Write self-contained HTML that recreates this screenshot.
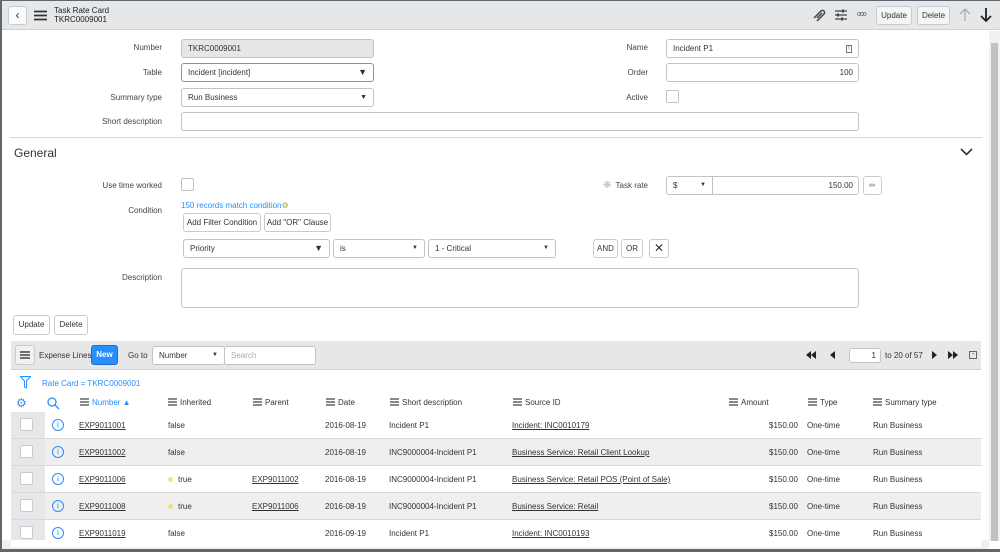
<html><head><style>
*{box-sizing:border-box;margin:0;padding:0}
body{width:1000px;height:552px;overflow:hidden;background:#5f6770;font-family:"Liberation Sans",sans-serif;font-size:8px;color:#333;position:relative}
.a{position:absolute}
#pg{left:0;top:1px;width:1000px;height:548px;background:#fff;overflow:hidden}
.hdr{left:0;top:0;width:1000px;height:29px;background:#e6e7e8;border-bottom:1px solid #cfd2d4}
.btn{position:absolute;border:1px solid #c8ccd0;border-radius:3px;background:#f4f5f5;font-size:8px;text-align:center;color:#333;white-space:nowrap}
.lbl{position:absolute;text-align:right;font-size:8px;color:#444}
.in{position:absolute;border:1px solid #bfc4c8;border-radius:3px;background:#fff;font-size:8px;padding-left:6px;line-height:17px;color:#333;white-space:nowrap}
.cb{position:absolute;width:13px;height:13px;border:1px solid #bfc4c8;border-radius:2px;background:#fff}
.car{position:absolute;right:6px;top:0;font-size:7px}
.ham{display:inline-block;width:9px;height:8px;vertical-align:-1px;margin-right:3px}
.th{position:absolute;top:397px;font-size:8px;color:#333;white-space:nowrap}
.row{position:absolute;left:10px;width:970px;height:27px;border-bottom:1px solid #d6d8da}
.row span{position:absolute;top:9px;font-size:8px;white-space:nowrap}
.u{text-decoration:underline}
.chk{position:absolute;left:9px;top:6px;width:13px;height:13px;background:#fff;border:1px solid #c8ccd0;border-radius:2px}
.info{position:absolute;left:41px;top:7px;width:12px;height:12px;border:1.2px solid #278efc;border-radius:50%;color:#278efc;font-size:8px;text-align:center;line-height:10px;font-family:"Liberation Serif",serif}
.dot{display:inline-block;width:5px;height:5px;border-radius:50%;background:#f0e08a;margin-right:5px}
</style></head><body>
<div class="a" id="pg">
<div class="a hdr">
 <div class="btn" style="left:8px;top:5px;width:19px;height:19px;background:#fafafa;font-size:12px;line-height:16px">&#8249;</div>
 <svg class="a" style="left:34px;top:9px" width="13" height="11"><path d="M0 1.5H13M0 5.5H13M0 9.5H13" stroke="#333" stroke-width="1.8"/></svg>
 <div class="a" style="left:54px;top:5px;font-size:8px;color:#222;line-height:9px">Task Rate Card<br>TKRC0009001</div>
 <svg class="a" style="left:812px;top:8px" width="14" height="14"><path d="M3 11L10 4a2 2 0 0 1 3 3L6 14" fill="none" stroke="#444" stroke-width="1.5" transform="translate(-1,-2)"/><path d="M5 9L10 4" stroke="#444" stroke-width="1.5"/></svg>
 <svg class="a" style="left:835px;top:8px" width="12" height="12"><path d="M0 2H12M0 6H12M0 10H12" stroke="#444" stroke-width="1.2"/><rect x="7" y="0.5" width="2" height="3" fill="#444"/><rect x="2" y="4.5" width="2" height="3" fill="#444"/><rect x="6" y="8.5" width="2" height="3" fill="#444"/></svg>
 <div class="a" style="left:857px;top:10px;font-size:7px;color:#555;letter-spacing:-1px">ooo</div>
 <div class="btn" style="left:876px;top:5px;width:36px;height:19px;line-height:17px">Update</div>
 <div class="btn" style="left:917px;top:5px;width:33px;height:19px;line-height:17px">Delete</div>
 <svg class="a" style="left:959px;top:7px" width="12" height="14"><path d="M6 13V1M1 6L6 1L11 6" fill="none" stroke="#aab" stroke-width="1.3"/></svg>
 <svg class="a" style="left:980px;top:7px" width="12" height="14"><path d="M6 0V13M1 8L6 13L11 8" fill="none" stroke="#222" stroke-width="1.8"/></svg>
</div>
<div class="a" style="left:0;top:0;width:2px;height:548px;background:#5f6770"></div>
<div class="a" style="left:989px;top:30px;width:11px;height:510px;background:#f1f1f1"></div>
<div class="a" style="left:991px;top:42px;width:7px;height:498px;background:#c1c1c1"></div>
<div class="a" style="left:2px;top:539px;width:987px;height:9px;background:#f1f1f1"></div>

<div class="lbl" style="left:60px;top:42px;width:102px">Number</div>
<div class="in" style="left:181px;top:38px;width:193px;height:19px;background:#e6e6e6">TKRC0009001</div>
<div class="lbl" style="left:60px;top:67px;width:102px">Table</div>
<div class="in" style="left:181px;top:62px;width:193px;height:19px;border-color:#6b9bd8">Incident [incident]<span class="car" style="font-size:9px">&#9660;</span></div>
<div class="lbl" style="left:60px;top:92px;width:102px">Summary type</div>
<div class="in" style="left:181px;top:87px;width:193px;height:19px">Run Business<span class="car">&#9660;</span></div>
<div class="lbl" style="left:60px;top:116px;width:102px">Short description</div>
<div class="in" style="left:181px;top:111px;width:678px;height:19px"></div>
<div class="lbl" style="left:560px;top:42px;width:88px">Name</div>
<div class="in" style="left:666px;top:38px;width:193px;height:19px">Incident P1<span class="car" style="border:1px solid #777;width:6px;height:8px;top:5px;font-size:5px;line-height:6px;text-align:center">!</span></div>
<div class="lbl" style="left:560px;top:67px;width:88px">Order</div>
<div class="in" style="left:666px;top:62px;width:193px;height:19px;text-align:right;padding-right:5px">100</div>
<div class="lbl" style="left:560px;top:92px;width:88px">Active</div>
<div class="cb" style="left:666px;top:89px"></div>

<div class="a" style="left:10px;top:136px;width:972px;border-top:1px solid #d6d8da"></div>
<div class="a" style="left:14px;top:145px;font-size:12px;color:#333">General</div>
<svg class="a" style="left:960px;top:147px" width="13" height="8"><path d="M1 1L6.5 6.5L12 1" fill="none" stroke="#333" stroke-width="1.6"/></svg>

<div class="lbl" style="left:60px;top:180px;width:102px">Use time worked</div>
<div class="cb" style="left:181px;top:177px"></div>
<div class="a" style="left:603px;top:179px;font-size:10px;color:#bbb">&#10059;</div>
<div class="lbl" style="left:610px;top:180px;width:38px">Task rate</div>
<div class="in" style="left:666px;top:175px;width:47px;height:19px;border-radius:3px 0 0 3px">$<span class="car" style="font-size:6px">&#9660;</span></div>
<div class="in" style="left:712px;top:175px;width:147px;height:19px;border-radius:0 3px 3px 0;text-align:right;padding-right:5px">150.00</div>
<div class="btn" style="left:863px;top:175px;width:19px;height:19px;background:#fff;line-height:17px;color:#777">&#9999;</div>

<div class="lbl" style="left:60px;top:205px;width:102px">Condition</div>
<div class="a" style="left:181px;top:200px;color:#278efc;white-space:nowrap">150 records match condition<span style="color:#9a4">&#9881;</span></div>
<div class="btn" style="left:183px;top:212px;width:78px;height:19px;background:#fff;line-height:17px">Add Filter Condition</div>
<div class="btn" style="left:264px;top:212px;width:67px;height:19px;background:#fff;line-height:17px">Add "OR" Clause</div>
<div class="in" style="left:183px;top:238px;width:147px;height:19px">Priority<span class="car" style="font-size:9px">&#9660;</span></div>
<div class="in" style="left:333px;top:238px;width:92px;height:19px">is<span class="car" style="font-size:6px">&#9660;</span></div>
<div class="in" style="left:428px;top:238px;width:128px;height:19px">1 - Critical<span class="car" style="font-size:6px">&#9660;</span></div>
<div class="btn" style="left:593px;top:238px;width:25px;height:19px;background:#fff;line-height:17px">AND</div>
<div class="btn" style="left:621px;top:238px;width:22px;height:19px;background:#fff;line-height:17px">OR</div>
<div class="btn" style="left:649px;top:238px;width:20px;height:19px;background:#fff;line-height:16px;font-size:12px">&#10005;</div>

<div class="lbl" style="left:60px;top:272px;width:102px">Description</div>
<div class="in" style="left:181px;top:267px;width:678px;height:40px"></div>
<div class="btn" style="left:13px;top:314px;width:37px;height:20px;background:#fff;line-height:18px">Update</div>
<div class="btn" style="left:54px;top:314px;width:34px;height:20px;background:#fff;line-height:18px">Delete</div>

<div class="a" style="left:11px;top:340px;width:970px;height:29px;background:#e6e7e8;border-bottom:1px solid #cfd2d4"></div>
<div class="btn" style="left:15px;top:344px;width:20px;height:20px;background:#f1f1f1"><svg style="position:absolute;left:4px;top:5px" width="10" height="8"><path d="M0 1H10M0 4H10M0 7H10" stroke="#444" stroke-width="1.4"/></svg></div>
<div class="a" style="left:39px;top:350px;color:#333;white-space:nowrap">Expense Lines</div>
<div class="a" style="left:91px;top:344px;width:27px;height:20px;background:#278efc;border:1px solid #1a6fd0;border-radius:3px;color:#fff;font-weight:bold;text-align:center;line-height:18px">New</div>
<div class="a" style="left:128px;top:350px;white-space:nowrap">Go to</div>
<div class="in" style="left:152px;top:345px;width:73px;height:19px">Number<span class="car" style="font-size:6px">&#9660;</span></div>
<div class="in" style="left:224px;top:345px;width:92px;height:19px;color:#aaa">Search</div>
<svg class="a" style="left:806px;top:350px" width="30" height="8"><path d="M0 4L5 0V8ZM5 4L10 0V8ZM24 4L29 0V8Z" fill="#222"/></svg>
<div class="in" style="left:849px;top:347px;width:32px;height:15px;text-align:right;padding-right:4px;line-height:13px">1</div>
<div class="a" style="left:885px;top:350px;white-space:nowrap">to 20 of 57</div>
<svg class="a" style="left:932px;top:350px" width="32" height="8"><path d="M0 0L5 4L0 8ZM16 0L21 4L16 8ZM21 0L26 4L21 8Z" fill="#222"/></svg>
<div class="a" style="left:969px;top:350px;width:8px;height:8px;border:1px solid #666;font-size:7px;line-height:5px;text-align:center">-</div>

<svg class="a" style="left:20px;top:375px" width="11" height="13"><path d="M0.5 0.5H10.5L6.5 5V12L4.5 11V5Z" fill="none" stroke="#278efc" stroke-width="1"/></svg>
<div class="a" style="left:42px;top:378px;color:#278efc;white-space:nowrap">Rate Card = TKRC0009001</div>
<div class="a" style="left:16px;top:395px;color:#278efc;font-size:12px">&#9881;</div>
<svg class="a" style="left:47px;top:396px" width="13" height="13"><circle cx="5" cy="5" r="4" fill="none" stroke="#278efc" stroke-width="1.3"/><path d="M8 8L12 12" stroke="#278efc" stroke-width="1.3"/></svg>
<div class="th" style="left:80px;color:#278efc"><svg class="ham" viewBox="0 0 9 8"><path d="M0 1H9M0 4H9M0 7H9" stroke="#444" stroke-width="1.3"/></svg>Number &#9650;</div>
<div class="th" style="left:168px"><svg class="ham" viewBox="0 0 9 8"><path d="M0 1H9M0 4H9M0 7H9" stroke="#444" stroke-width="1.3"/></svg>Inherited</div>
<div class="th" style="left:253px"><svg class="ham" viewBox="0 0 9 8"><path d="M0 1H9M0 4H9M0 7H9" stroke="#444" stroke-width="1.3"/></svg>Parent</div>
<div class="th" style="left:326px"><svg class="ham" viewBox="0 0 9 8"><path d="M0 1H9M0 4H9M0 7H9" stroke="#444" stroke-width="1.3"/></svg>Date</div>
<div class="th" style="left:390px"><svg class="ham" viewBox="0 0 9 8"><path d="M0 1H9M0 4H9M0 7H9" stroke="#444" stroke-width="1.3"/></svg>Short description</div>
<div class="th" style="left:513px"><svg class="ham" viewBox="0 0 9 8"><path d="M0 1H9M0 4H9M0 7H9" stroke="#444" stroke-width="1.3"/></svg>Source ID</div>
<div class="th" style="left:729px"><svg class="ham" viewBox="0 0 9 8"><path d="M0 1H9M0 4H9M0 7H9" stroke="#444" stroke-width="1.3"/></svg>Amount</div>
<div class="th" style="left:808px"><svg class="ham" viewBox="0 0 9 8"><path d="M0 1H9M0 4H9M0 7H9" stroke="#444" stroke-width="1.3"/></svg>Type</div>
<div class="th" style="left:873px"><svg class="ham" viewBox="0 0 9 8"><path d="M0 1H9M0 4H9M0 7H9" stroke="#444" stroke-width="1.3"/></svg>Summary type</div>
<div class="a" style="left:11px;top:411px;width:970px;border-top:1px solid #d6d8da"></div>

<div class="row" style="left:11px;top:411px;background:#fff"></div>
<div class="row" style="left:11px;top:438px;background:#efefef"></div>
<div class="row" style="left:11px;top:465px;background:#fff"></div>
<div class="row" style="left:11px;top:492px;background:#efefef"></div>
<div class="row" style="left:11px;top:519px;background:#fff;border:0"></div>
<div class="a" style="left:11px;top:411px;width:34px;height:128px;background:#e6e7e8"></div>

<div class="row" style="left:11px;top:411px"><div class="chk"></div><div class="info">i</div><span class="u" style="left:68px">EXP9011001</span><span style="left:157px">false</span><span style="left:314px">2016-08-19</span><span style="left:378px">Incident P1</span><span class="u" style="left:501px">Incident: INC0010179</span><span style="left:758px">$150.00</span><span style="left:796px">One-time</span><span style="left:862px">Run Business</span></div>
<div class="row" style="left:11px;top:438px"><div class="chk"></div><div class="info">i</div><span class="u" style="left:68px">EXP9011002</span><span style="left:157px">false</span><span style="left:314px">2016-08-19</span><span style="left:378px">INC9000004-Incident P1</span><span class="u" style="left:501px">Business Service: Retail Client Lookup</span><span style="left:758px">$150.00</span><span style="left:796px">One-time</span><span style="left:862px">Run Business</span></div>
<div class="row" style="left:11px;top:465px"><div class="chk"></div><div class="info">i</div><span class="u" style="left:68px">EXP9011006</span><span style="left:157px"><i class="dot"></i>true</span><span class="u" style="left:241px">EXP9011002</span><span style="left:314px">2016-08-19</span><span style="left:378px">INC9000004-Incident P1</span><span class="u" style="left:501px">Business Service: Retail POS (Point of Sale)</span><span style="left:758px">$150.00</span><span style="left:796px">One-time</span><span style="left:862px">Run Business</span></div>
<div class="row" style="left:11px;top:492px"><div class="chk"></div><div class="info">i</div><span class="u" style="left:68px">EXP9011008</span><span style="left:157px"><i class="dot"></i>true</span><span class="u" style="left:241px">EXP9011006</span><span style="left:314px">2016-08-19</span><span style="left:378px">INC9000004-Incident P1</span><span class="u" style="left:501px">Business Service: Retail</span><span style="left:758px">$150.00</span><span style="left:796px">One-time</span><span style="left:862px">Run Business</span></div>
<div class="row" style="left:11px;top:519px;border:0"><div class="chk"></div><div class="info">i</div><span class="u" style="left:68px">EXP9011019</span><span style="left:157px">false</span><span style="left:314px">2016-09-19</span><span style="left:378px">Incident P1</span><span class="u" style="left:501px">Incident: INC0010193</span><span style="left:758px">$150.00</span><span style="left:796px">One-time</span><span style="left:862px">Run Business</span></div>
</div>
</body></html>
